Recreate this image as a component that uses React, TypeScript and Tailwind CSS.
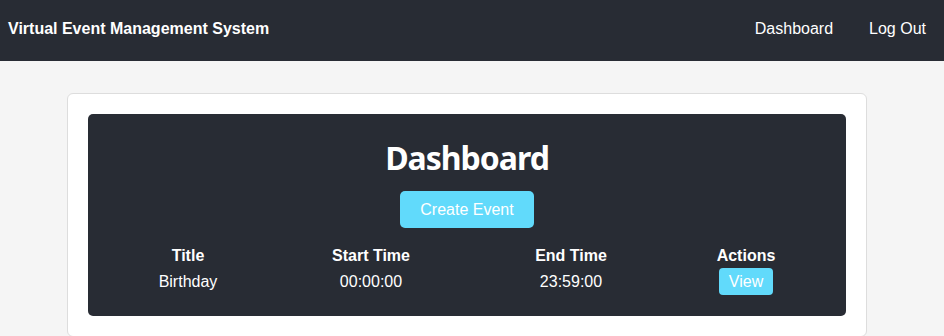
import React from "react";

const arial = { fontFamily: '"Liberation Sans", Arial, sans-serif' };

export default function App() {
  const cols = "grid grid-cols-[140px_226px_174px_176px] ml-[30px]";
  return (
    <div className="min-h-[336px] bg-[#f5f5f5]" style={arial}>
      <nav className="h-[61px] bg-[#282c34] flex items-center justify-between pb-1 pl-2 pr-[18px] text-white text-[16px] leading-[20px]">
        <span className="font-bold">Virtual Event Management System</span>
        <div className="flex gap-9">
          <span>Dashboard</span>
          <span>Log Out</span>
        </div>
      </nav>
      <div className="mt-8 ml-[67px] w-[800px] bg-white border border-[#dddddd] rounded-[6px] p-5">
        <div className="bg-[#282c34] rounded-[5px] pt-6 pb-[21px] text-white flex flex-col">
          <h1
            className="text-[32px] leading-[40px] font-bold text-center tracking-[-1px]"
            style={{ fontFamily: '"Noto Sans", sans-serif' }}
          >
            Dashboard
          </h1>
          <div className="flex justify-center mt-[13px]">
            <button className="w-[134px] h-[37px] bg-[#61dafb] rounded-[5px] text-white text-[16px] leading-[20px]">
              Create Event
            </button>
          </div>
          <div className={`${cols} mt-[18px] font-bold text-[16px] leading-[20px] justify-items-center`}>
            <div>Title</div>
            <div>Start Time</div>
            <div>End Time</div>
            <div>Actions</div>
          </div>
          <div className={`${cols} mt-[2px] h-[27px] text-[16px] leading-[20px] justify-items-center items-center`}>
            <div>Birthday</div>
            <div>00:00:00</div>
            <div>23:59:00</div>
            <div>
              <button className="w-[54px] h-[27px] bg-[#61dafb] rounded-[4px] text-white text-[16px] leading-[20px]">
                View
              </button>
            </div>
          </div>
        </div>
      </div>
    </div>
  );
}
